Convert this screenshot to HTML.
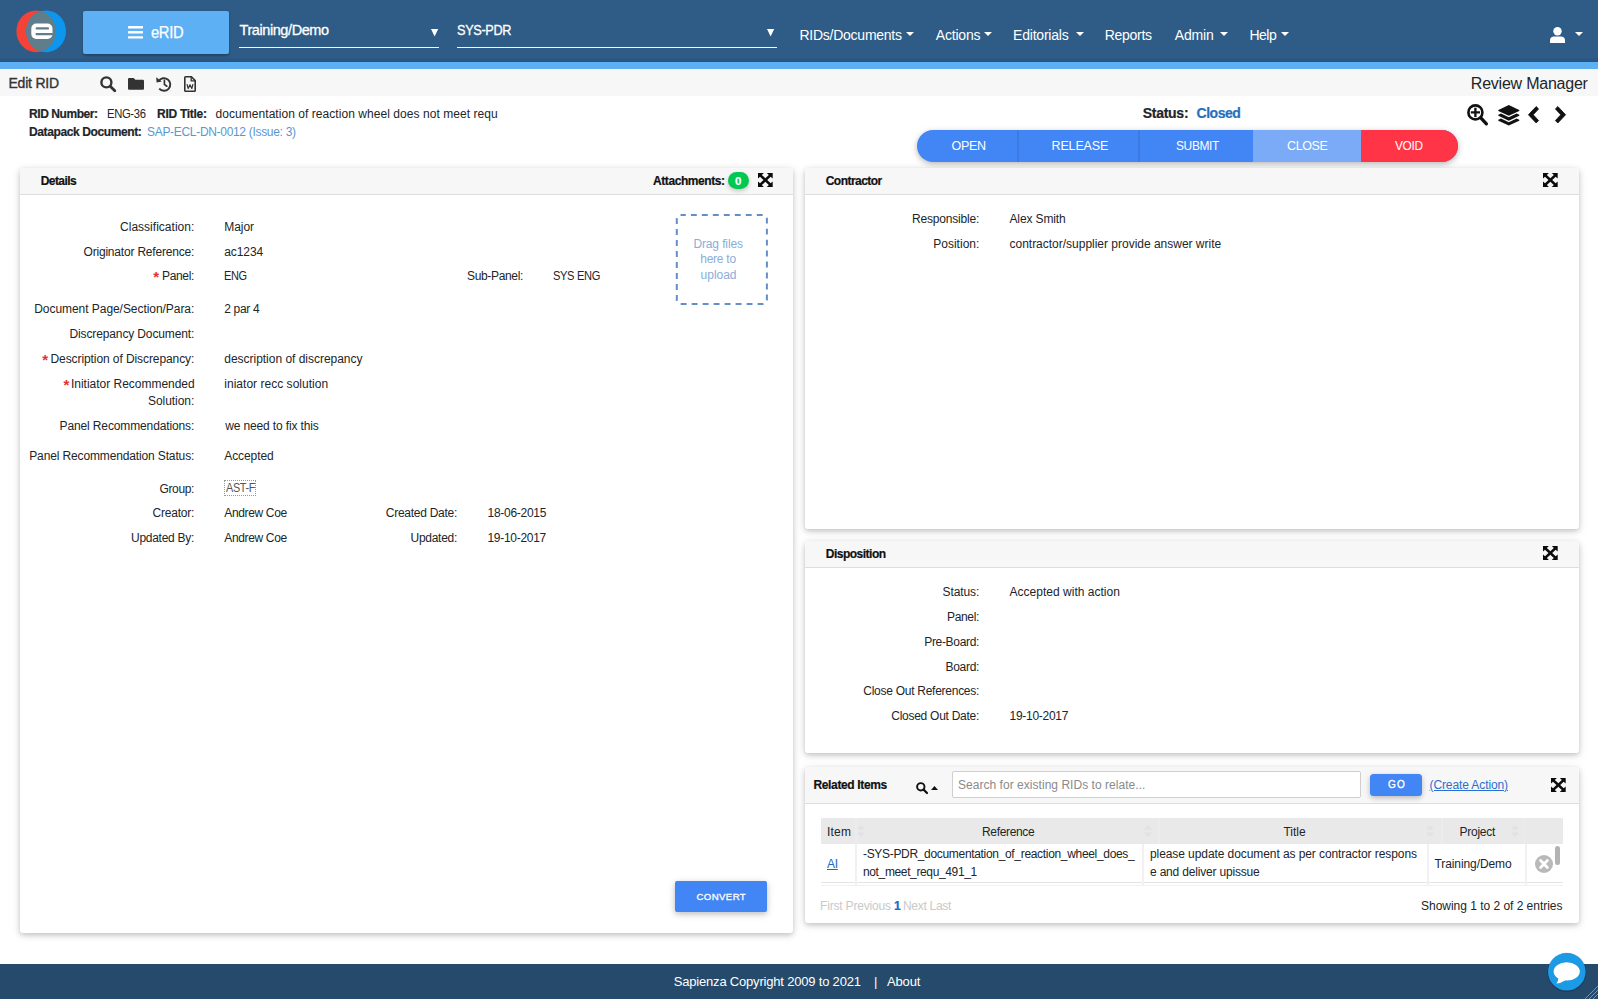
<!DOCTYPE html>
<html lang="en"><head><meta charset="utf-8"><title>Edit RID - Review Manager</title>
<style>
html,body{margin:0;padding:0;}
body{width:1598px;height:1000px;position:relative;overflow:hidden;background:#fff;font-family:"Liberation Sans",sans-serif;color:#212529;}
.t{position:absolute;white-space:nowrap;line-height:1em;display:block;transform-origin:0 0;}
.b{position:absolute;display:block;}
.card{position:absolute;background:#fff;box-shadow:0 2px 5px rgba(0,0,0,.16),0 2px 10px rgba(0,0,0,.12);border-radius:3px;}
.card .hd{position:absolute;left:0;right:0;top:0;background:#f7f7f7;border-bottom:1px solid #dedede;border-radius:3px 3px 0 0;}
svg{position:absolute;display:block;overflow:visible;}

</style></head>
<body>
<!-- ===== top navigation ===== -->
<div class="b" id="nav" style="left:0;top:0;width:1598px;height:62px;background:#2e5c87;"></div>
<div class="b" id="navsh" style="left:0;top:57.5px;width:1598px;height:4.5px;background:linear-gradient(#2b5984,#27557f);"></div>
<div class="b" id="band" style="left:0;top:62px;width:1598px;height:7px;background:#5eb0f5;"></div>
<div class="b" id="toolbar" style="left:0;top:69px;width:1598px;height:27px;background:#f7f7f7;"></div>
<!-- logo -->
<svg id="logo" style="left:0;top:0;" width="80" height="62" viewBox="0 0 80 62">
  <ellipse cx="36.2" cy="31.3" rx="19.8" ry="20.9" fill="#f44336"/>
  <ellipse cx="46.1" cy="31.3" rx="19.9" ry="20.9" fill="#0e96ee"/>
  <path d="M41.14 11.06A19.8 20.9 0 0 1 41.14 51.54A19.9 20.9 0 0 1 41.14 11.06Z" fill="#607d8b"/>
  <rect x="31.3" y="23.6" width="21.2" height="15.4" rx="5" ry="5" fill="#fff"/>
  <rect x="35.6" y="27.2" width="13.4" height="2.3" rx="1" fill="#607d8b"/>
  <rect x="35.6" y="33.1" width="17.4" height="2.1" rx=".6" fill="#607d8b"/>
</svg>
<!-- eRID button -->
<div class="b" id="eridbtn" style="left:83px;top:11px;width:146px;height:43px;background:#5eb0f5;border-radius:2px;box-shadow:0 1.5px 2.5px rgba(0,0,0,.28);"></div>
<svg id="bars" style="left:128px;top:26px;" width="15" height="13" viewBox="0 0 15 13"><rect x="0" y="0" width="15" height="2.4" rx=".6" fill="#fff"/><rect x="0" y="5.1" width="15" height="2.4" rx=".6" fill="#fff"/><rect x="0" y="10.2" width="15" height="2.4" rx=".6" fill="#fff"/></svg>
<!-- selects -->
<div class="b" style="left:239px;top:46.5px;width:200px;height:1px;background:#f4f7fa;"></div>
<div class="b" style="left:457px;top:46.5px;width:320px;height:1px;background:#f4f7fa;"></div>
<svg style="left:430.8px;top:29.4px;" width="7.2" height="7.6" viewBox="0 0 7.2 7.6"><path d="M0 0H7.2L3.6 7.6Z" fill="#fff"/></svg>
<svg style="left:767px;top:29.4px;" width="7.2" height="7.6" viewBox="0 0 7.2 7.6"><path d="M0 0H7.2L3.6 7.6Z" fill="#fff"/></svg>
<!-- nav carets -->
<svg style="left:906px;top:32.2px;" width="8" height="4" viewBox="0 0 8 4"><path d="M0 0H8L4 4Z" fill="#fff"/></svg>
<svg style="left:984px;top:32.2px;" width="8" height="4" viewBox="0 0 8 4"><path d="M0 0H8L4 4Z" fill="#fff"/></svg>
<svg style="left:1075.5px;top:32.2px;" width="8" height="4" viewBox="0 0 8 4"><path d="M0 0H8L4 4Z" fill="#fff"/></svg>
<svg style="left:1220px;top:32.2px;" width="8" height="4" viewBox="0 0 8 4"><path d="M0 0H8L4 4Z" fill="#fff"/></svg>
<svg style="left:1281px;top:32.2px;" width="8" height="4" viewBox="0 0 8 4"><path d="M0 0H8L4 4Z" fill="#fff"/></svg>
<svg style="left:1575.3px;top:32px;" width="8" height="4" viewBox="0 0 8 4"><path d="M0 0H8L4 4Z" fill="#fff"/></svg>
<!-- user icon -->
<svg id="user" style="left:1549.5px;top:27px;" width="15" height="16" viewBox="0 0 15 16"><circle cx="7.5" cy="4.2" r="4.2" fill="#fff"/><path d="M0 16V13.6Q0 9.4 4.4 9.4H10.6Q15 9.4 15 13.6V16Z" fill="#fff"/></svg>
<!-- toolbar icons -->
<svg id="i-search" style="left:99.5px;top:76px;" width="16" height="16" viewBox="0 0 16 16"><circle cx="6.4" cy="6.4" r="5" fill="none" stroke="#333" stroke-width="2.4"/><path d="M10.2 10.2L14.8 14.8" stroke="#333" stroke-width="2.8" stroke-linecap="round"/></svg>
<svg id="i-folder" style="left:128px;top:78.4px;" width="16" height="12" viewBox="0 0 16 12"><path d="M1.1 0H5.6L7.4 1.8H14.9Q16 1.8 16 2.9V10.7Q16 11.8 14.9 11.8H1.1Q0 11.8 0 10.7V1.1Q0 0 1.1 0Z" fill="#333"/></svg>
<svg id="i-history" style="left:155.5px;top:75.5px;" width="16" height="16" viewBox="0 0 16 16"><path d="M2.6 5.2A6.3 6.3 0 1 1 3.2 12.6" fill="none" stroke="#333" stroke-width="1.9"/><path d="M0.2 1.2L0.6 6.6L5.8 5.6Z" fill="#333"/><path d="M8.4 4.4V8.4L10.8 10.2" fill="none" stroke="#333" stroke-width="1.7" stroke-linecap="round"/></svg>
<svg id="i-file" style="left:184px;top:76px;" width="12" height="16" viewBox="0 0 12 16"><path d="M1.6 .8H7.4L11.2 4.6V14.4Q11.2 15.2 10.4 15.2H1.6Q.8 15.2 .8 14.4V1.6Q.8 .8 1.6 .8Z" fill="none" stroke="#333" stroke-width="1.6"/><path d="M7.2 .8V4.8H11.2" fill="none" stroke="#333" stroke-width="1.3"/><path d="M3 8.2L4.2 12.6L6 8.8L7.8 12.6L9 8.2" fill="none" stroke="#333" stroke-width="1.2" stroke-linejoin="round"/></svg>
<!-- status icons -->
<svg id="i-zoom" style="left:1467px;top:103.7px;" width="21" height="21.5" viewBox="0 0 21 21.5"><circle cx="8.4" cy="8.4" r="7" fill="none" stroke="#111" stroke-width="2.6"/><path d="M13.8 13.8L19.4 19.8" stroke="#111" stroke-width="3.3" stroke-linecap="round"/><path d="M3.8 8.4H13M8.4 3.8V13" stroke="#111" stroke-width="2.3"/></svg>
<svg id="i-layers" style="left:1497.6px;top:104.6px;" width="21.6" height="20.6" viewBox="0 0 21.6 20.6"><path d="M10.8 0L21.2 4.9Q21.6 5.4 21.2 5.9L10.8 10.8L.4 5.9Q0 5.4 .4 4.9Z" fill="#111"/><path d="M.4 9.8L3 8.6L10.8 12.3L18.6 8.6L21.2 9.8Q21.6 10.3 21.2 10.8L10.8 15.7L.4 10.8Q0 10.3 .4 9.8Z" fill="#111"/><path d="M.4 14.7L3 13.5L10.8 17.2L18.6 13.5L21.2 14.7Q21.6 15.2 21.2 15.7L10.8 20.6L.4 15.7Q0 15.2 .4 14.7Z" fill="#111"/></svg>
<svg id="i-left" style="left:1528.4px;top:106px;" width="11" height="17.5" viewBox="0 0 11 17.5"><path d="M.4 8.75L8.2 .5L10.6 2.9L5.2 8.75L10.6 14.6L8.2 17L.4 8.75Z" fill="#111" stroke="#111" stroke-width=".8" stroke-linejoin="round"/></svg>
<svg id="i-right" style="left:1555.2px;top:106px;" width="11" height="17.5" viewBox="0 0 11 17.5"><path d="M10.6 8.75L2.8 .5L.4 2.9L5.8 8.75L.4 14.6L2.8 17L10.6 8.75Z" fill="#111" stroke="#111" stroke-width=".8" stroke-linejoin="round"/></svg>
<!-- status button group -->
<div class="b" id="btngrp" style="left:917px;top:130px;width:541px;height:32px;border-radius:16px;overflow:hidden;box-shadow:0 2px 5px rgba(0,0,0,.18),0 2px 8px rgba(0,0,0,.12);background:#4285f4;">
  <div class="b" style="left:100px;top:0;width:2px;height:32px;background:rgba(0,0,0,.07);"></div>
  <div class="b" style="left:221px;top:0;width:2px;height:32px;background:rgba(0,0,0,.07);"></div>
  <div class="b" style="left:336px;top:0;width:108px;height:32px;background:#7baaf7;"></div>
  <div class="b" style="left:444px;top:0;width:97px;height:32px;background:#ff3547;"></div>
</div>
<!-- ===== Details card ===== -->
<div class="card" id="c-details" style="left:20px;top:168px;width:773px;height:765px;"><div class="hd" style="height:26px;"></div></div>
<div class="b" id="badge" style="left:728px;top:172px;width:21px;height:17px;border-radius:9px;background:#00c851;box-shadow:0 2px 4px rgba(0,0,0,.2);"></div>
<svg class="xp" style="left:758px;top:173px;" width="14.7" height="14" viewBox="0 0 15 15" preserveAspectRatio="none"><path d="M0.00 0.00L6.00 0.00L3.95 2.05L7.50 5.60L11.05 2.05L9.00 0.00L15.00 0.00L15.00 6.00L12.95 3.95L9.40 7.50L12.95 11.05L15.00 9.00L15.00 15.00L9.00 15.00L11.05 12.95L7.50 9.40L3.95 12.95L6.00 15.00L0.00 15.00L0.00 9.00L2.05 11.05L5.60 7.50L2.05 3.95L0.00 6.00Z" fill="#0c0c0c"/></svg>
<svg id="drop" style="left:0;top:0;" width="800" height="320" viewBox="0 0 800 320"><rect x="676.8" y="214.9" width="90.1" height="89.1" rx="4" ry="4" fill="none" stroke="#658ec8" stroke-width="2" stroke-dasharray="5.9 5.085" stroke-dashoffset="0.9"/></svg>
<div class="b" id="grp" style="left:224.1px;top:480px;width:29.6px;height:13.8px;border:1px dotted #999;"></div>
<div class="b" id="convert" style="left:675px;top:881px;width:92px;height:30.5px;background:#4285f4;border-radius:2px;box-shadow:0 2px 5px rgba(0,0,0,.16),0 2px 10px rgba(0,0,0,.12);"></div>
<!-- ===== Contractor card ===== -->
<div class="card" id="c-contractor" style="left:805px;top:168px;width:773.5px;height:361px;"><div class="hd" style="height:26px;"></div></div>
<svg class="xp" style="left:1543.4px;top:173px;" width="14.7" height="14" viewBox="0 0 15 15" preserveAspectRatio="none"><path d="M0.00 0.00L6.00 0.00L3.95 2.05L7.50 5.60L11.05 2.05L9.00 0.00L15.00 0.00L15.00 6.00L12.95 3.95L9.40 7.50L12.95 11.05L15.00 9.00L15.00 15.00L9.00 15.00L11.05 12.95L7.50 9.40L3.95 12.95L6.00 15.00L0.00 15.00L0.00 9.00L2.05 11.05L5.60 7.50L2.05 3.95L0.00 6.00Z" fill="#0c0c0c"/></svg>
<!-- ===== Disposition card ===== -->
<div class="card" id="c-disp" style="left:805px;top:541px;width:773.5px;height:212px;"><div class="hd" style="height:26px;"></div></div>
<svg class="xp" style="left:1543.4px;top:546px;" width="14.7" height="14" viewBox="0 0 15 15" preserveAspectRatio="none"><path d="M0.00 0.00L6.00 0.00L3.95 2.05L7.50 5.60L11.05 2.05L9.00 0.00L15.00 0.00L15.00 6.00L12.95 3.95L9.40 7.50L12.95 11.05L15.00 9.00L15.00 15.00L9.00 15.00L11.05 12.95L7.50 9.40L3.95 12.95L6.00 15.00L0.00 15.00L0.00 9.00L2.05 11.05L5.60 7.50L2.05 3.95L0.00 6.00Z" fill="#0c0c0c"/></svg>
<!-- ===== Related items card ===== -->
<div class="card" id="c-rel" style="left:805px;top:767px;width:773.5px;height:155.5px;"><div class="hd" style="height:36px;"></div></div>
<svg id="i-rsearch" style="left:916px;top:782px;" width="12" height="12" viewBox="0 0 12 12"><circle cx="4.8" cy="4.8" r="3.7" fill="none" stroke="#111" stroke-width="1.9"/><path d="M7.6 7.6L11 11" stroke="#111" stroke-width="2.2" stroke-linecap="round"/></svg>
<svg style="left:931px;top:785.5px;" width="7" height="4" viewBox="0 0 7 4"><path d="M0 4H7L3.5 0Z" fill="#111"/></svg>
<div class="b" id="rinput" style="left:952px;top:771px;width:407px;height:25px;border:1px solid #cfcfcf;background:#fff;border-radius:2px;"></div>
<div class="b" id="gobtn" style="left:1370px;top:774px;width:52px;height:22px;background:#4285f4;border-radius:3.5px;box-shadow:0 2px 4px rgba(0,0,0,.16),0 2px 8px rgba(0,0,0,.1);"></div>
<svg class="xp" style="left:1551px;top:778px;" width="14.7" height="14" viewBox="0 0 15 15" preserveAspectRatio="none"><path d="M0.00 0.00L6.00 0.00L3.95 2.05L7.50 5.60L11.05 2.05L9.00 0.00L15.00 0.00L15.00 6.00L12.95 3.95L9.40 7.50L12.95 11.05L15.00 9.00L15.00 15.00L9.00 15.00L11.05 12.95L7.50 9.40L3.95 12.95L6.00 15.00L0.00 15.00L0.00 9.00L2.05 11.05L5.60 7.50L2.05 3.95L0.00 6.00Z" fill="#0c0c0c"/></svg>
<!-- table -->
<div class="b" id="thead" style="left:820.5px;top:817.5px;width:742px;height:26px;background:#e9e9e9;"></div>
<div class="b" style="left:855px;top:817.5px;width:1.5px;height:26px;background:#ececec;"></div>
<div class="b" style="left:1158.3px;top:817.5px;width:1.5px;height:26px;background:#ececec;"></div>
<div class="b" style="left:1441px;top:817.5px;width:1.5px;height:26px;background:#ececec;"></div>
<div class="b" style="left:1523.5px;top:817.5px;width:1.5px;height:26px;background:#ececec;"></div>
<svg style="left:857px;top:825px;" width="8" height="12" viewBox="0 0 8 12"><path d="M0 4.6L4 0L8 4.6ZM0 7.4L4 12L8 7.4Z" fill="#e2e2e2"/></svg>
<svg style="left:1144px;top:825px;" width="8" height="12" viewBox="0 0 8 12"><path d="M0 4.6L4 0L8 4.6ZM0 7.4L4 12L8 7.4Z" fill="#e2e2e2"/></svg>
<svg style="left:1426px;top:825px;" width="8" height="12" viewBox="0 0 8 12"><path d="M0 4.6L4 0L8 4.6ZM0 7.4L4 12L8 7.4Z" fill="#e2e2e2"/></svg>
<svg style="left:1511px;top:825px;" width="8" height="12" viewBox="0 0 8 12"><path d="M0 4.6L4 0L8 4.6ZM0 7.4L4 12L8 7.4Z" fill="#e2e2e2"/></svg>
<div class="b" id="rowline" style="left:820.5px;top:882px;width:742px;height:1px;background:#e4e4e4;"></div>
<div class="b" style="left:820.5px;top:885px;width:742px;height:1px;background:#f1f1f1;"></div>
<div class="b" style="left:855px;top:843.5px;width:2px;height:42px;background:#f1f1f1;"></div>
<div class="b" style="left:1142px;top:843.5px;width:2px;height:42px;background:#f1f1f1;"></div>
<div class="b" style="left:1426.5px;top:843.5px;width:2px;height:42px;background:#f1f1f1;"></div>
<div class="b" style="left:1524.5px;top:843.5px;width:2px;height:42px;background:#f1f1f1;"></div>
<div class="b" id="sthumb" style="left:1555px;top:846px;width:5px;height:18.5px;border-radius:2.5px;background:#b3b3b3;"></div>
<svg id="i-xcirc" style="left:1535px;top:855px;" width="18" height="18" viewBox="0 0 18 18"><circle cx="9" cy="9" r="9" fill="#b9b9b9"/><path d="M5.6 5.6L12.4 12.4M12.4 5.6L5.6 12.4" stroke="#fff" stroke-width="2.8" stroke-linecap="round"/></svg>
<!-- ===== footer ===== -->
<div class="b" id="footer" style="left:0;top:964px;width:1598px;height:35px;background:#254a6b;"></div>
<svg id="grip" style="left:1584px;top:985px;" width="14" height="14" viewBox="0 0 14 14"><path d="M1 14L14 1M5 14L14 5M9 14L14 9" stroke="#7f93a6" stroke-width="1"/></svg>
<svg id="chat" style="left:1548.2px;top:953.2px;" width="37.6" height="37.6" viewBox="0 0 37.6 37.6"><circle cx="18.8" cy="19.3" r="19.6" fill="rgba(10,30,50,.28)"/><circle cx="18.8" cy="18.8" r="18.8" fill="#1b9ae6"/><ellipse cx="18.7" cy="18.4" rx="13.1" ry="9.2" fill="#fff"/><path d="M10.5 24.5Q10.4 28.2 8.3 30.4Q13 30.2 17.5 27.2Z" fill="#fff"/></svg>

<span class="t" id="t0" style="left:150.90px;top:24.00px;font-size:17px;color:#fff;letter-spacing:-0.404px;transform:scaleX(0.867);-webkit-text-stroke:.25px #fff;">eRID</span>
<span class="t" id="t1" style="left:239.50px;top:23.00px;font-size:14.5px;color:#fff;letter-spacing:-0.416px;-webkit-text-stroke:.3px #fff;">Training/Demo</span>
<span class="t" id="t2" style="left:457.00px;top:23.00px;font-size:14.5px;color:#fff;letter-spacing:-0.399px;transform:scaleX(0.877);-webkit-text-stroke:.3px #fff;">SYS-PDR</span>
<span class="t" id="t3" style="left:799.50px;top:28.00px;font-size:14px;color:#fff;letter-spacing:-0.254px;">RIDs/Documents</span>
<span class="t" id="t4" style="left:935.75px;top:28.00px;font-size:14px;color:#fff;letter-spacing:-0.193px;">Actions</span>
<span class="t" id="t5" style="left:1013.00px;top:28.00px;font-size:14px;color:#fff;letter-spacing:-0.203px;">Editorials</span>
<span class="t" id="t6" style="left:1104.75px;top:28.00px;font-size:14px;color:#fff;letter-spacing:-0.295px;">Reports</span>
<span class="t" id="t7" style="left:1174.70px;top:28.00px;font-size:14px;color:#fff;letter-spacing:-0.149px;">Admin</span>
<span class="t" id="t8" style="left:1249.40px;top:28.00px;font-size:14px;color:#fff;letter-spacing:-0.469px;">Help</span>
<span class="t" id="t9" style="left:8.50px;top:76.00px;font-size:14px;color:#333;letter-spacing:-0.216px;-webkit-text-stroke:.35px #333;">Edit RID</span>
<span class="t" id="t10" style="left:1470.80px;top:76.00px;font-size:16px;letter-spacing:-0.225px;">Review Manager</span>
<span class="t" id="t11" style="left:29.00px;top:108.00px;font-size:12px;font-weight:700;-webkit-text-stroke:.2px #212529;letter-spacing:-0.434px;">RID Number:</span>
<span class="t" id="t12" style="left:106.75px;top:108.00px;font-size:12px;letter-spacing:-0.373px;transform:scaleX(0.939);">ENG-36</span>
<span class="t" id="t13" style="left:157.00px;top:108.00px;font-size:12px;font-weight:700;-webkit-text-stroke:.2px #212529;letter-spacing:-0.272px;">RID Title:</span>
<span class="t" id="t14" style="left:215.50px;top:108.00px;font-size:12px;letter-spacing:0.054px;">documentation of reaction wheel does not meet requ</span>
<span class="t" id="t15" style="left:29.00px;top:126.00px;font-size:12px;font-weight:700;-webkit-text-stroke:.2px #212529;letter-spacing:-0.389px;">Datapack Document:</span>
<span class="t" id="t16" style="left:147.00px;top:126.00px;font-size:12px;color:#5b97cf;letter-spacing:-0.309px;">SAP-ECL-DN-0012 (Issue: 3)</span>
<span class="t" id="t17" style="left:1142.70px;top:106.00px;font-size:14px;font-weight:700;-webkit-text-stroke:.2px #212529;letter-spacing:-0.264px;">Status:</span>
<span class="t" id="t18" style="left:1196.60px;top:106.00px;font-size:14px;font-weight:700;-webkit-text-stroke:.2px #2470bd;color:#2470bd;letter-spacing:-0.505px;">Closed</span>
<span class="t" id="t19" style="left:951.50px;top:140.00px;font-size:12.5px;color:#fff;letter-spacing:-0.299px;">OPEN</span>
<span class="t" id="t20" style="left:1051.50px;top:140.00px;font-size:12.5px;color:#fff;letter-spacing:-0.138px;">RELEASE</span>
<span class="t" id="t21" style="left:1176.30px;top:140.00px;font-size:12.5px;color:#fff;letter-spacing:-0.366px;transform:scaleX(0.955);">SUBMIT</span>
<span class="t" id="t22" style="left:1287.00px;top:140.00px;font-size:12.5px;color:#fff;letter-spacing:-0.385px;">CLOSE</span>
<span class="t" id="t23" style="left:1394.50px;top:140.00px;font-size:12.5px;color:#fff;letter-spacing:-0.368px;transform:scaleX(0.951);">VOID</span>
<span class="t" id="t24" style="left:40.75px;top:175.00px;font-size:12px;font-weight:700;-webkit-text-stroke:.2px #111;color:#111;letter-spacing:-0.571px;">Details</span>
<span class="t" id="t25" style="left:653.00px;top:175.00px;font-size:12px;font-weight:700;-webkit-text-stroke:.2px #111;color:#111;letter-spacing:-0.425px;">Attachments:</span>
<span class="t" id="t26" style="left:735.00px;top:176.00px;font-size:11.5px;font-weight:700;-webkit-text-stroke:.2px #fff;color:#fff;">0</span>
<span class="t" id="t27" style="left:120.00px;top:221.00px;font-size:12px;letter-spacing:0.022px;">Classification:</span>
<span class="t" id="t28" style="left:224.25px;top:221.00px;font-size:12px;letter-spacing:-0.065px;">Major</span>
<span class="t" id="t29" style="left:83.50px;top:246.00px;font-size:12px;letter-spacing:-0.194px;">Originator Reference:</span>
<span class="t" id="t30" style="left:224.25px;top:246.00px;font-size:12px;letter-spacing:-0.089px;">ac1234</span>
<span class="t" id="t31" style="left:153.30px;top:269.00px;font-size:15px;font-weight:700;color:#e53030;">*</span>
<span class="t" id="t32" style="left:162.00px;top:270.00px;font-size:12px;letter-spacing:-0.338px;">Panel:</span>
<span class="t" id="t33" style="left:224.25px;top:270.00px;font-size:12px;letter-spacing:-0.383px;transform:scaleX(0.914);">ENG</span>
<span class="t" id="t34" style="left:467.00px;top:270.00px;font-size:12px;letter-spacing:-0.338px;">Sub-Panel:</span>
<span class="t" id="t35" style="left:553.00px;top:270.00px;font-size:12px;letter-spacing:-0.378px;transform:scaleX(0.926);">SYS ENG</span>
<span class="t" id="t36" style="left:34.25px;top:303.00px;font-size:12px;letter-spacing:-0.052px;">Document Page/Section/Para:</span>
<span class="t" id="t37" style="left:224.25px;top:303.00px;font-size:12px;letter-spacing:-0.323px;">2 par 4</span>
<span class="t" id="t38" style="left:69.50px;top:328.00px;font-size:12px;letter-spacing:-0.127px;">Discrepancy Document:</span>
<span class="t" id="t39" style="left:42.30px;top:352.00px;font-size:15px;font-weight:700;color:#e53030;">*</span>
<span class="t" id="t40" style="left:50.50px;top:353.00px;font-size:12px;letter-spacing:-0.085px;">Description of Discrepancy:</span>
<span class="t" id="t41" style="left:224.25px;top:353.00px;font-size:12px;letter-spacing:-0.020px;">description of discrepancy</span>
<span class="t" id="t42" style="left:63.60px;top:377.00px;font-size:15px;font-weight:700;color:#e53030;">*</span>
<span class="t" id="t43" style="left:71.00px;top:378.00px;font-size:12px;letter-spacing:-0.019px;">Initiator Recommended</span>
<span class="t" id="t44" style="left:224.25px;top:378.00px;font-size:12px;letter-spacing:0.027px;">iniator recc solution</span>
<span class="t" id="t45" style="left:148.00px;top:395.00px;font-size:12px;letter-spacing:-0.046px;">Solution:</span>
<span class="t" id="t46" style="left:59.50px;top:420.00px;font-size:12px;letter-spacing:-0.123px;">Panel Recommendations:</span>
<span class="t" id="t47" style="left:225.25px;top:420.00px;font-size:12px;letter-spacing:-0.142px;">we need to fix this</span>
<span class="t" id="t48" style="left:29.25px;top:450.00px;font-size:12px;letter-spacing:-0.136px;">Panel Recommendation Status:</span>
<span class="t" id="t49" style="left:224.25px;top:450.00px;font-size:12px;letter-spacing:-0.087px;">Accepted</span>
<span class="t" id="t50" style="left:159.50px;top:483.00px;font-size:12px;letter-spacing:-0.370px;">Group:</span>
<span class="t" id="t51" style="left:225.50px;top:482.00px;font-size:12px;color:#555;letter-spacing:-0.388px;transform:scaleX(0.903);">AST-F</span>
<span class="t" id="t52" style="left:152.50px;top:507.00px;font-size:12px;letter-spacing:-0.216px;">Creator:</span>
<span class="t" id="t53" style="left:224.25px;top:507.00px;font-size:12px;letter-spacing:-0.346px;">Andrew Coe</span>
<span class="t" id="t54" style="left:385.75px;top:507.00px;font-size:12px;letter-spacing:-0.260px;">Created Date:</span>
<span class="t" id="t55" style="left:487.50px;top:507.00px;font-size:12px;letter-spacing:-0.273px;">18-06-2015</span>
<span class="t" id="t56" style="left:131.00px;top:532.00px;font-size:12px;letter-spacing:-0.271px;">Updated By:</span>
<span class="t" id="t57" style="left:224.25px;top:532.00px;font-size:12px;letter-spacing:-0.346px;">Andrew Coe</span>
<span class="t" id="t58" style="left:410.50px;top:532.00px;font-size:12px;letter-spacing:-0.267px;">Updated:</span>
<span class="t" id="t59" style="left:487.50px;top:532.00px;font-size:12px;letter-spacing:-0.301px;">19-10-2017</span>
<span class="t" id="t60" style="left:693.40px;top:238.00px;font-size:12px;color:#8badd6;letter-spacing:-0.120px;">Drag files</span>
<span class="t" id="t61" style="left:700.30px;top:253.00px;font-size:12px;color:#8badd6;letter-spacing:-0.264px;">here to</span>
<span class="t" id="t62" style="left:700.60px;top:269.00px;font-size:12px;color:#8badd6;letter-spacing:-0.032px;">upload</span>
<span class="t" id="t63" style="left:696.50px;top:892.00px;font-size:9.6px;color:#fff;letter-spacing:0.405px;-webkit-text-stroke:.3px #fff;">CONVERT</span>
<span class="t" id="t64" style="left:825.75px;top:175.00px;font-size:12px;font-weight:700;-webkit-text-stroke:.2px #111;color:#111;letter-spacing:-0.546px;">Contractor</span>
<span class="t" id="t65" style="left:912.00px;top:213.00px;font-size:12px;letter-spacing:-0.186px;">Responsible:</span>
<span class="t" id="t66" style="left:1009.50px;top:213.00px;font-size:12px;letter-spacing:-0.131px;">Alex Smith</span>
<span class="t" id="t67" style="left:933.25px;top:238.00px;font-size:12px;letter-spacing:0.007px;">Position:</span>
<span class="t" id="t68" style="left:1009.50px;top:238.00px;font-size:12px;letter-spacing:-0.011px;">contractor/supplier provide answer write</span>
<span class="t" id="t69" style="left:825.75px;top:548.00px;font-size:12px;font-weight:700;-webkit-text-stroke:.2px #111;color:#111;letter-spacing:-0.500px;">Disposition</span>
<span class="t" id="t70" style="left:942.50px;top:586.00px;font-size:12px;letter-spacing:-0.087px;">Status:</span>
<span class="t" id="t71" style="left:1009.50px;top:586.00px;font-size:12px;letter-spacing:0.019px;">Accepted with action</span>
<span class="t" id="t72" style="left:947.00px;top:611.00px;font-size:12px;letter-spacing:-0.338px;">Panel:</span>
<span class="t" id="t73" style="left:924.25px;top:636.00px;font-size:12px;letter-spacing:-0.327px;">Pre-Board:</span>
<span class="t" id="t74" style="left:945.50px;top:661.00px;font-size:12px;letter-spacing:-0.304px;">Board:</span>
<span class="t" id="t75" style="left:863.25px;top:685.00px;font-size:12px;letter-spacing:-0.265px;">Close Out References:</span>
<span class="t" id="t76" style="left:891.25px;top:710.00px;font-size:12px;letter-spacing:-0.264px;">Closed Out Date:</span>
<span class="t" id="t77" style="left:1009.50px;top:710.00px;font-size:12px;letter-spacing:-0.273px;">19-10-2017</span>
<span class="t" id="t78" style="left:813.50px;top:779.00px;font-size:12px;font-weight:700;-webkit-text-stroke:.2px #111;color:#111;letter-spacing:-0.363px;">Related Items</span>
<span class="t" id="t79" style="left:958.00px;top:779.00px;font-size:12px;color:#8a8a8a;letter-spacing:0.035px;">Search for existing RIDs to relate...</span>
<span class="t" id="t80" style="left:1388.00px;top:780.00px;font-size:10px;color:#fff;letter-spacing:1.222px;-webkit-text-stroke:.35px #fff;">GO</span>
<span class="t" id="t81" style="left:1429.50px;top:779.00px;font-size:12px;color:#2a6fd0;letter-spacing:-0.104px;text-decoration:underline;">(Create Action)</span>
<span class="t" id="t82" style="left:827.00px;top:826.00px;font-size:12px;letter-spacing:0.219px;">Item</span>
<span class="t" id="t83" style="left:982.00px;top:826.00px;font-size:12px;letter-spacing:-0.336px;">Reference</span>
<span class="t" id="t84" style="left:1283.50px;top:826.00px;font-size:12px;letter-spacing:-0.013px;">Title</span>
<span class="t" id="t85" style="left:1459.50px;top:826.00px;font-size:12px;letter-spacing:-0.252px;">Project</span>
<span class="t" id="t86" style="left:827.00px;top:858.00px;font-size:12px;color:#2068c0;letter-spacing:-0.254px;text-decoration:underline;">AI</span>
<span class="t" id="t87" style="left:863.00px;top:848.00px;font-size:12px;letter-spacing:-0.322px;">-SYS-PDR_documentation_of_reaction_wheel_does_</span>
<span class="t" id="t88" style="left:863.00px;top:866.00px;font-size:12px;letter-spacing:-0.366px;">not_meet_requ_491_1</span>
<span class="t" id="t89" style="left:1150.00px;top:848.00px;font-size:12px;letter-spacing:-0.082px;">please update document as per contractor respons</span>
<span class="t" id="t90" style="left:1150.00px;top:866.00px;font-size:12px;letter-spacing:-0.187px;">e and deliver upissue</span>
<span class="t" id="t91" style="left:1434.50px;top:858.00px;font-size:12px;letter-spacing:-0.090px;">Training/Demo</span>
<span class="t" id="t92" style="left:820.00px;top:900.00px;font-size:12px;color:#c9c9c9;letter-spacing:-0.181px;">First Previous</span>
<span class="t" id="t93" style="left:894.00px;top:900.00px;font-size:12px;font-weight:700;-webkit-text-stroke:.2px #2068c0;color:#2068c0;">1</span>
<span class="t" id="t94" style="left:903.00px;top:900.00px;font-size:12px;color:#c9c9c9;letter-spacing:-0.294px;">Next Last</span>
<span class="t" id="t95" style="left:1421.00px;top:900.00px;font-size:12px;letter-spacing:-0.023px;">Showing 1 to 2 of 2 entries</span>
<span class="t" id="t96" style="left:673.75px;top:975.00px;font-size:13px;color:#fff;letter-spacing:-0.192px;">Sapienza Copyright 2009 to 2021</span>
<span class="t" id="t97" style="left:874.00px;top:975.00px;font-size:13px;color:#fff;">|</span>
<span class="t" id="t98" style="left:887.00px;top:975.00px;font-size:13px;color:#fff;letter-spacing:-0.153px;">About</span>
</body></html>
